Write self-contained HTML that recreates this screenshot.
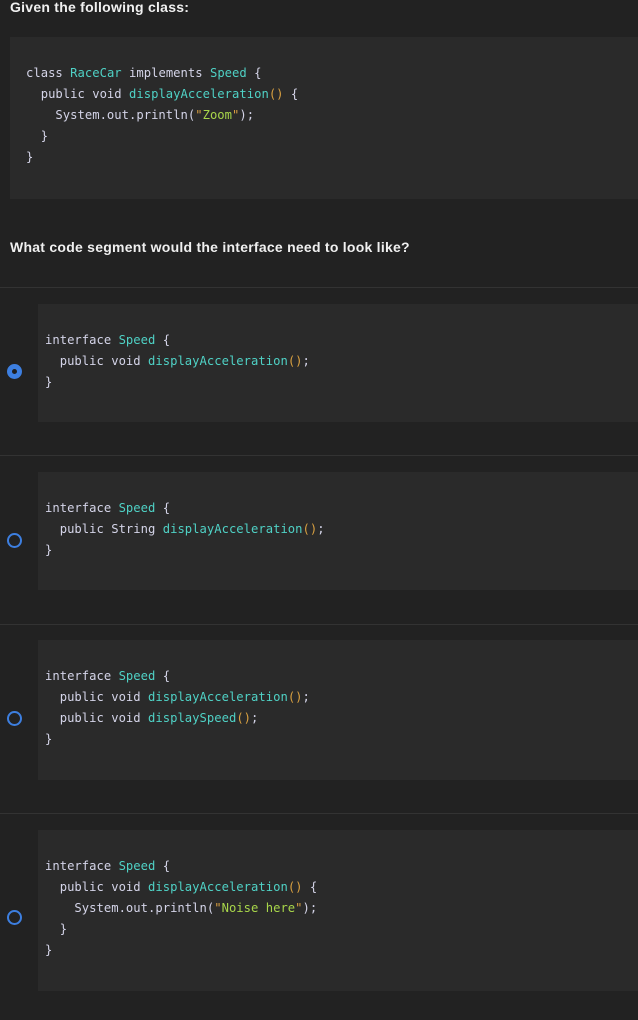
<!DOCTYPE html>
<html><head><meta charset="utf-8"><style>
*{margin:0;padding:0;box-sizing:border-box}
body{width:638px;height:1020px;background:#222222;position:relative;overflow:hidden;font-family:"Liberation Sans",sans-serif}
.q{position:absolute;left:10px;color:#f0f0f0;font-weight:bold;font-size:14px;letter-spacing:0.25px}
.code{position:absolute;background:#2a2a2a;right:0}
pre{position:absolute;font-family:"DejaVu Sans Mono","Liberation Mono",monospace;font-size:12.2px;line-height:21px;color:#d4d4e8;letter-spacing:0.02px}
.t{color:#4fd1c5}.p{color:#d9a040}.s{color:#a8d64a}
.sep{position:absolute;left:0;right:0;height:1px;background:#333}
.r{position:absolute;left:7px;width:15px;height:15px;border-radius:50%;border:2px solid #3d7fe0}
.r.on{background:#3d7fe0;border:none}
.r.on::after{content:"";position:absolute;left:5px;top:5px;width:5px;height:5px;border-radius:50%;background:#1e1e1e}
</style></head><body>
<div class="q" style="top:-1px">Given the following class:</div>
<div class="code" style="left:10px;top:37px;height:162px"><pre style="left:16px;top:26px">class <span class="t">RaceCar</span> implements <span class="t">Speed</span> {
  public void <span class="t">displayAcceleration</span><span class="p">()</span> {
    System.out.println(<span class="p">"</span><span class="s">Zoom</span><span class="p">"</span>);
  }
}</pre></div>
<div class="q" style="top:239px">What code segment would the interface need to look like?</div>

<div class="sep" style="top:287px"></div>
<div class="r on" style="top:364px"></div>
<div class="code" style="left:38px;top:304px;height:118px"><pre style="left:7px;top:26px">interface <span class="t">Speed</span> {
  public void <span class="t">displayAcceleration</span><span class="p">()</span>;
}</pre></div>

<div class="sep" style="top:455px"></div>
<div class="r" style="top:533px"></div>
<div class="code" style="left:38px;top:472px;height:118px"><pre style="left:7px;top:26px">interface <span class="t">Speed</span> {
  public String <span class="t">displayAcceleration</span><span class="p">()</span>;
}</pre></div>

<div class="sep" style="top:624px"></div>
<div class="r" style="top:711px"></div>
<div class="code" style="left:38px;top:640px;height:140px"><pre style="left:7px;top:26px">interface <span class="t">Speed</span> {
  public void <span class="t">displayAcceleration</span><span class="p">()</span>;
  public void <span class="t">displaySpeed</span><span class="p">()</span>;
}</pre></div>

<div class="sep" style="top:813px"></div>
<div class="r" style="top:910px"></div>
<div class="code" style="left:38px;top:830px;height:161px"><pre style="left:7px;top:26px">interface <span class="t">Speed</span> {
  public void <span class="t">displayAcceleration</span><span class="p">()</span> {
    System.out.println(<span class="p">"</span><span class="s">Noise here</span><span class="p">"</span>);
  }
}</pre></div>
</body></html>
